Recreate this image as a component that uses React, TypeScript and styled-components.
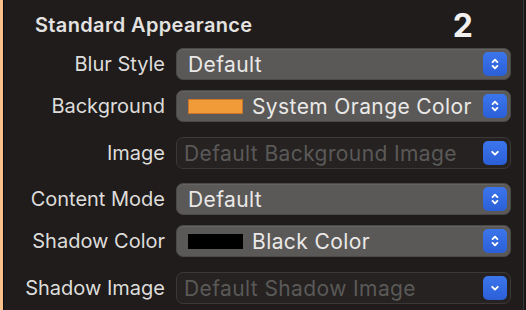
import styled, { createGlobalStyle } from "styled-components";

const Global = createGlobalStyle`
  html, body {
    margin: 0;
    padding: 0;
    background: #1f1c1b;
  }
  body {
    font-family: Inter, "Noto Sans", "DejaVu Sans", sans-serif;
    -webkit-font-smoothing: antialiased;
  }
`

const Frame = styled.div`
  display: flex;
  width: 526px;
  height: 310px;
  overflow: hidden;
  background: #1f1c1b;
`

const Accent = styled.div`
  width: 3px;
  background: #f8c28a;
  border-right: 1px solid #0d0b0b;
`

const Panel = styled.div`
  flex: 1;
  display: flex;
  flex-direction: column;
`

const Edge = styled.div`
  width: 2px;
  background: #171515;
  border-left: 1px solid #383534;
`

const Header = styled.div`
  height: 48px;
  display: flex;
  align-items: center;
  justify-content: space-between;
  padding: 2px 50px 0 31px;
  box-sizing: border-box;
`

const Title = styled.h2`
  margin: 0;
  font-size: 20px;
  font-weight: 600;
  color: #e4e2e0;
  letter-spacing: 0.35px;
`

const Count = styled.span`
  font-size: 32px;
  font-weight: 700;
  color: #f2f0ee;
  line-height: 1;
  margin-top: 1px;
`

const Form = styled.div`
  display: grid;
  grid-template-columns: 161px 335px;
  column-gap: 11px;
  row-gap: 10px;
`

const Label = styled.div<{ $dim?: boolean }>`
  display: flex;
  align-items: center;
  justify-content: flex-end;
  font-size: 20px;
  color: #dedcda;
  margin: ${p => (p.$dim ? "5px 0 4px" : "0")};
`

const Popup = styled.div<{ $disabled?: boolean }>`
  height: 32px;
  box-sizing: border-box;
  display: flex;
  align-items: center;
  gap: 9px;
  padding: ${p => (p.$disabled ? "0 3px 0 7px" : "0 3px 0 11px")};
  border-radius: 7px;
  margin: ${p => (p.$disabled ? "5px 0 4px" : "0")};
  background: ${p => (p.$disabled ? "#252221" : "#5a5958")};
  border: 1px solid ${p => (p.$disabled ? "#3b3837" : "#4b4948")};
  box-shadow: ${p => (p.$disabled ? "none" : "inset 0 1px 0 #666463")};
`

const Value = styled.span<{ $disabled?: boolean }>`
  flex: 1;
  min-width: 0;
  font-size: 21px;
  letter-spacing: 0.4px;
  color: ${p => (p.$disabled ? "#5b5958" : "#ebe9e7")};
  white-space: nowrap;
`

const Swatch = styled.span<{ $color: string; $edge: string }>`
  width: 55px;
  height: 15px;
  flex: none;
  box-sizing: border-box;
  background: ${p => p.$color};
  border: 1px solid ${p => p.$edge};
`

const Stepper = styled.span`
  width: 24px;
  height: 24px;
  flex: none;
  border-radius: 5px;
  background: linear-gradient(#3c76ec, #2b5fd7);
  display: flex;
  align-items: center;
  justify-content: center;
`

function Arrows({ single }: { single?: boolean }) {
  return (
    <Stepper>
      <svg width="12" height="16" viewBox="0 0 12 16" fill="none" stroke="#fff" strokeWidth="1.9" strokeLinecap="round" strokeLinejoin="round">
        {single ? (
          <path d="M3.2 6.8l2.8 2.8 2.8-2.8" />
        ) : (
          <>
            <path d="M3.6 6.1l2.4-2.4 2.4 2.4" />
            <path d="M3.6 9.9l2.4 2.4 2.4-2.4" />
          </>
        )}
      </svg>
    </Stepper>
  )
}

type Field = {
  label: string
  value: string
  disabled?: boolean
  swatch?: [string, string]
}

const fields: Field[] = [
  { label: "Blur Style", value: "Default" },
  { label: "Background", value: "System Orange Color", swatch: ["#f09a38", "#c9762a"] },
  { label: "Image", value: "Default Background Image", disabled: true },
  { label: "Content Mode", value: "Default" },
  { label: "Shadow Color", value: "Black Color", swatch: ["#000000", "#000000"] },
  { label: "Shadow Image", value: "Default Shadow Image", disabled: true },
]

export default function App() {
  return (
    <>
      <Global />
      <Frame>
        <Accent />
        <Panel>
          <Header>
            <Title>Standard Appearance</Title>
            <Count>2</Count>
          </Header>
          <Form>
            {fields.map(f => (
              <>
                <Label key={f.label + "-l"} $dim={f.disabled}>{f.label}</Label>
                <Popup key={f.label + "-p"} $disabled={f.disabled}>
                  {f.swatch && <Swatch $color={f.swatch[0]} $edge={f.swatch[1]} />}
                  <Value $disabled={f.disabled}>{f.value}</Value>
                  <Arrows single={f.disabled} />
                </Popup>
              </>
            ))}
          </Form>
        </Panel>
        <Edge />
      </Frame>
    </>
  )
}
